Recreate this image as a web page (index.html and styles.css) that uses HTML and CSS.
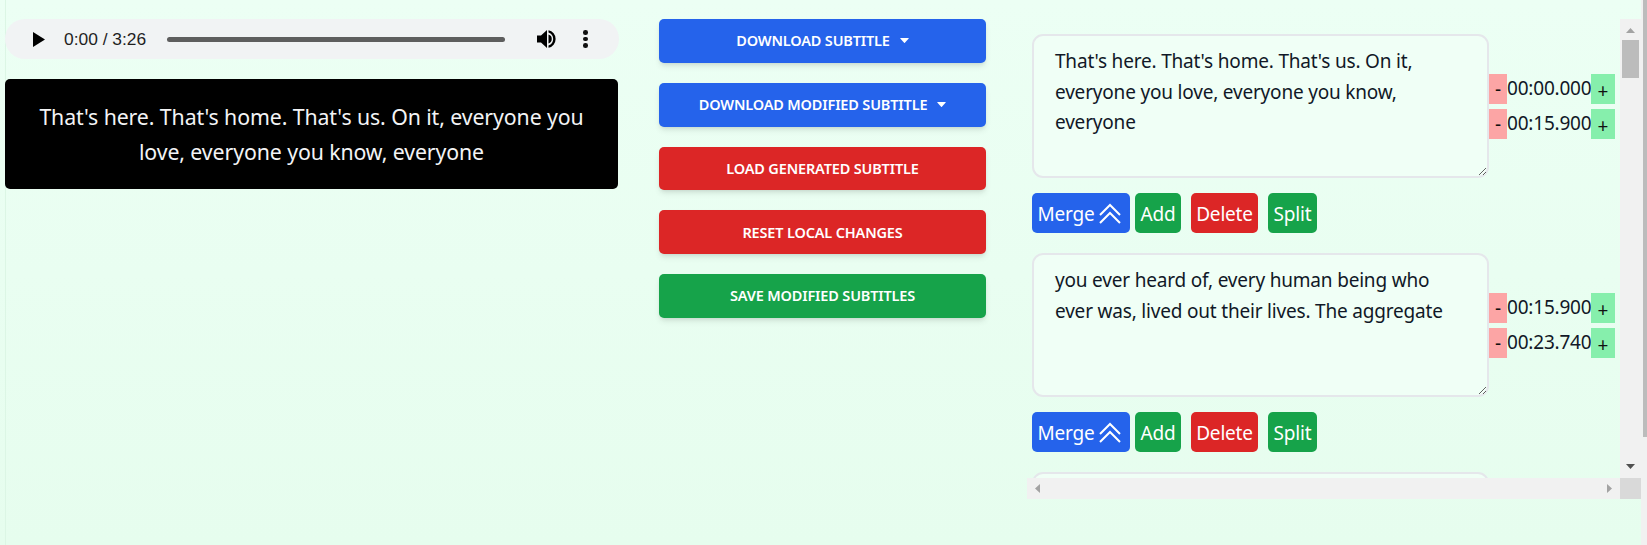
FILE: index.html
```html
<!DOCTYPE html>
<html lang="en">
<head>
<meta charset="utf-8">
<title>Subtitle editor</title>
<link rel="stylesheet" href="styles.css">
</head>
<body>
<main class="page">
  <section class="player">
    <div class="audio">
      <svg class="play" viewBox="0 0 12 15"><path d="M0 0l12 7.5L0 15z"/></svg>
      <span class="time">0:00 / 3:26</span>
      <span class="progress"></span>
      <svg class="volume" viewBox="0 0 20 20"><path d="M0 6.5h4L10 1v18l-6-5.5H0z"/><path d="M11.5 1.2a9 9 0 0 1 0 17.6v-2.2a7 7 0 0 0 0-13.2zM11.5 5.6a4.6 4.6 0 0 1 0 8.8z"/></svg>
      <span class="kebab"><i></i><i></i><i></i></span>
    </div>
    <div class="caption">That's here. That's home. That's us. On it, everyone you love, everyone you know, everyone</div>
  </section>

  <section class="actions">
    <button class="action blue">DOWNLOAD SUBTITLE<svg class="caret" viewBox="0 0 9 5"><path d="M.6 0h7.8q.6 0 .3.5L4.9 4.7q-.4.4-.8 0L.3.5Q0 0 .6 0z"/></svg></button>
    <button class="action blue">DOWNLOAD MODIFIED SUBTITLE<svg class="caret" viewBox="0 0 9 5"><path d="M.6 0h7.8q.6 0 .3.5L4.9 4.7q-.4.4-.8 0L.3.5Q0 0 .6 0z"/></svg></button>
    <button class="action red">LOAD GENERATED SUBTITLE</button>
    <button class="action red">RESET LOCAL CHANGES</button>
    <button class="action green">SAVE MODIFIED SUBTITLES</button>
  </section>

  <section class="panel">
    <div class="cues">
      <article class="cue">
        <div class="cue-main">
          <textarea class="cue-text" spellcheck="false">That's here. That's home. That's us. On it,
everyone you love, everyone you know,
everyone</textarea>
          <div class="stamps">
            <div class="stamp"><button class="nudge minus">-</button><span class="stamp-value">00:00.000</span><button class="nudge plus">+</button></div>
            <div class="stamp"><button class="nudge minus">-</button><span class="stamp-value">00:15.900</span><button class="nudge plus">+</button></div>
          </div>
        </div>
        <div class="tools">
          <button class="tool blue merge">Merge<svg class="chevrons" viewBox="0 0 24 24"><path d="M4.5 12.75l7.5-7.5 7.5 7.5m-15 6l7.5-7.5 7.5 7.5"/></svg></button>
          <button class="tool green add">Add</button>
          <button class="tool red delete">Delete</button>
          <button class="tool green split">Split</button>
        </div>
      </article>
      <article class="cue">
        <div class="cue-main">
          <textarea class="cue-text" spellcheck="false">you ever heard of, every human being who
ever was, lived out their lives. The aggregate</textarea>
          <div class="stamps">
            <div class="stamp"><button class="nudge minus">-</button><span class="stamp-value">00:15.900</span><button class="nudge plus">+</button></div>
            <div class="stamp"><button class="nudge minus">-</button><span class="stamp-value">00:23.740</span><button class="nudge plus">+</button></div>
          </div>
        </div>
        <div class="tools">
          <button class="tool blue merge">Merge<svg class="chevrons" viewBox="0 0 24 24"><path d="M4.5 12.75l7.5-7.5 7.5 7.5m-15 6l7.5-7.5 7.5 7.5"/></svg></button>
          <button class="tool green add">Add</button>
          <button class="tool red delete">Delete</button>
          <button class="tool green split">Split</button>
        </div>
      </article>
      <article class="cue">
        <div class="cue-main"><textarea class="cue-text" spellcheck="false"></textarea></div>
      </article>
    </div>
    <div class="vbar">
      <svg class="arrow up" viewBox="0 0 9 5"><path d="M4.5 0L9 5H0z"/></svg>
      <span class="vthumb"></span>
      <svg class="arrow down" viewBox="0 0 9 5"><path d="M0 0h9L4.500 5z"/></svg>
    </div>
    <div class="hbar">
      <svg class="harrow" viewBox="0 0 5 9"><path d="M5 0v9L0 4.500z"/></svg>
      <svg class="harrow" viewBox="0 0 5 9"><path d="M0 0l5 4.500L0 9z"/></svg>
    </div>
    <div class="corner"></div>
  </section>
</main>
<div class="page-scroll"><span class="page-thumb"></span></div>
</body>
</html>
```
FILE: styles.css
```css
* { box-sizing: border-box; }
html, body { height: 100%; }
body {
  margin: 0;
  overflow: hidden;
  font-family: "Noto Sans", "Open Sans", sans-serif;
  color: #111827;
  background:
    linear-gradient(90deg, transparent 5px, #dcf6e5 5px, #dcf6e5 6px, transparent 6px),
    linear-gradient(180deg, #ecfff4, #e6fdee);
}
button { font-family: inherit; border: 0; padding: 0; cursor: pointer; }

.page {
  display: flex;
  align-items: flex-start;
  padding: 19px 0 0 5px;
}

.player { width: 614px; flex: none; }
.audio {
  display: flex;
  align-items: center;
  height: 40px;
  border-radius: 20px;
  background: #f1f3f4;
}
.play { width: 12px; height: 15px; margin-left: 28px; fill: #000; }
.time {
  margin-left: 19px;
  font: 17.4px "Liberation Sans", Arial, sans-serif;
  color: #1f1f1f;
}
.progress {
  width: 338px;
  height: 5px;
  margin-left: 21px;
  border-radius: 3px;
  background: #5e5e5e;
}
.volume { width: 20px; height: 20px; margin-left: 32px; fill: #000; }
.kebab {
  display: flex;
  flex-direction: column;
  gap: 2px;
  margin-left: 26px;
}
.kebab i { width: 4.600px; height: 4.600px; border-radius: 50%; background: #111; }

.caption {
  margin: 20px 1px 0 0;
  padding: 20px 30px;
  border-radius: 5px;
  background: #000;
  color: #f3f4f6;
  font-size: 21.300px;
  line-height: 35px;
  text-align: center;
  letter-spacing: -.1px;
}

.actions {
  display: flex;
  flex-direction: column;
  gap: 20px;
  width: 327px;
  flex: none;
  margin-left: 40px;
}
.action {
  display: flex;
  align-items: center;
  justify-content: center;
  height: 43.750px;
  padding-bottom: 1px;
  border-radius: 5px;
  color: #fff;
  font-size: 14.500px;
  font-weight: 600;
  letter-spacing: -.16px;
  box-shadow: 0 4px 6px -1px rgba(0,0,0,.1), 0 2px 4px -2px rgba(0,0,0,.1);
}
.caret { width: 9px; height: 5px; margin-left: 10px; fill: #fff; }
.blue { background: #2563eb; }
.red { background: #dc2626; }
.green { background: #16a34a; }

.panel {
  position: relative;
  width: 614px;
  height: 480px;
  flex: none;
  margin-left: 41px;
  overflow: hidden;
}
.cues {
  display: flex;
  flex-direction: column;
  gap: 20px;
  height: 459px;
  overflow: hidden;
  padding: 15px 0 0 5px;
}
.cue { display: flex; flex-direction: column; gap: 15px; flex: none; }
.cue-main { display: flex; align-items: center; }
.cue-text {
  display: block;
  width: 457px;
  height: 144px;
  flex: none;
  padding: 10px 21px;
  border: 2px solid #e5e7eb;
  border-radius: 11px;
  background: #f0fff6;
  color: #111827;
  font: 19px/30.600px "Noto Sans", "Open Sans", sans-serif;
  letter-spacing: -.19px;
  overflow: hidden;
  white-space: pre;
  outline: none;
}
.stamps { display: flex; flex-direction: column; gap: 5px; }
.stamp { display: flex; align-items: stretch; height: 30px; }
.nudge { color: #111; font-size: 19px; line-height: 30px; }
.minus { width: 18px; background: #fca5a5; }
.plus { width: 24px; padding-top: 2px; background: #86efac; }
.stamp-value {
  width: 84px;
  font-size: 19px;
  line-height: 28px;
  text-align: center;
  letter-spacing: -.2px;
  white-space: nowrap;
}

.tools { display: flex; height: 40px; }
.tool {
  display: flex;
  align-items: center;
  justify-content: center;
  flex: none;
  height: 40px;
  padding-top: 1px;
  border-radius: 5px;
  color: #fff;
  font-size: 19px;
  letter-spacing: -.2px;
}
.merge { width: 98px; padding-left: 1px; }
.chevrons {
  width: 32px;
  height: 32px;
  margin-left: -1px;
  fill: none;
  stroke: #fff;
  stroke-width: 1.500;
}
.add { width: 46px; margin-left: 5px; }
.delete { width: 67px; margin-left: 10px; }
.split { width: 49px; margin-left: 10px; }

.vbar {
  position: absolute;
  top: 0;
  right: 0;
  display: flex;
  flex-direction: column;
  align-items: center;
  width: 21px;
  height: 459px;
  padding-top: 9px;
  background: #f1f1f1;
}
.arrow { width: 9px; height: 5px; flex: none; }
.arrow.up { fill: #a3a3a3; }
.arrow.down { fill: #505050; margin-top: auto; margin-bottom: 9px; }
.vthumb { width: 17px; height: 38px; margin-top: 7px; background: #bcbcbc; }
.hbar {
  position: absolute;
  left: 0;
  bottom: 0;
  display: flex;
  align-items: center;
  justify-content: space-between;
  width: 593px;
  height: 21px;
  padding: 0 8px;
  background: #f1f1f1;
}
.harrow { width: 5px; height: 9px; fill: #a3a3a3; }
.corner {
  position: absolute;
  right: 0;
  bottom: 0;
  width: 21px;
  height: 21px;
  background: #d9d9d9;
}

.page-scroll {
  position: fixed;
  top: 0;
  right: 0;
  bottom: 0;
  width: 6px;
  background: #f1f1f1;
}
.page-thumb {
  display: block;
  width: 4px;
  height: 437px;
  margin-left: 2px;
  background: #bcbcbc;
}
```
